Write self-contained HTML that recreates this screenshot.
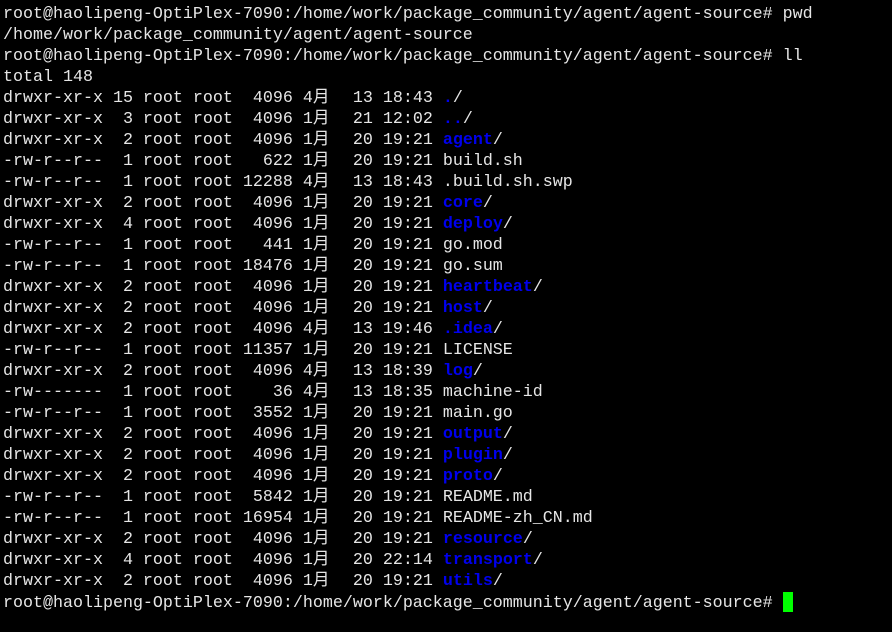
<!DOCTYPE html>
<html><head><meta charset="utf-8"><style>
html,body{margin:0;padding:0;background:#000;width:892px;height:632px;overflow:hidden}
pre{margin:0;padding:4px 0 0 3px;font-family:"Liberation Mono","Noto Sans CJK SC",monospace;font-size:16.67px;line-height:21px;color:#e6e6e6;white-space:pre}
.m{display:inline-block;width:50px}
.b{color:#0000ee;font-weight:bold}
.c{display:inline-block;width:10px;height:20px;background:#00ff00;vertical-align:-5px}
</style></head><body><pre>root@haolipeng-OptiPlex-7090:/home/work/package_community/agent/agent-source# pwd
/home/work/package_community/agent/agent-source
root@haolipeng-OptiPlex-7090:/home/work/package_community/agent/agent-source# ll
total 148
drwxr-xr-x 15 root root  4096 <span class="m">4月</span>13 18:43 <span class="b">.</span>/
drwxr-xr-x  3 root root  4096 <span class="m">1月</span>21 12:02 <span class="b">..</span>/
drwxr-xr-x  2 root root  4096 <span class="m">1月</span>20 19:21 <span class="b">agent</span>/
-rw-r--r--  1 root root   622 <span class="m">1月</span>20 19:21 build.sh
-rw-r--r--  1 root root 12288 <span class="m">4月</span>13 18:43 .build.sh.swp
drwxr-xr-x  2 root root  4096 <span class="m">1月</span>20 19:21 <span class="b">core</span>/
drwxr-xr-x  4 root root  4096 <span class="m">1月</span>20 19:21 <span class="b">deploy</span>/
-rw-r--r--  1 root root   441 <span class="m">1月</span>20 19:21 go.mod
-rw-r--r--  1 root root 18476 <span class="m">1月</span>20 19:21 go.sum
drwxr-xr-x  2 root root  4096 <span class="m">1月</span>20 19:21 <span class="b">heartbeat</span>/
drwxr-xr-x  2 root root  4096 <span class="m">1月</span>20 19:21 <span class="b">host</span>/
drwxr-xr-x  2 root root  4096 <span class="m">4月</span>13 19:46 <span class="b">.idea</span>/
-rw-r--r--  1 root root 11357 <span class="m">1月</span>20 19:21 LICENSE
drwxr-xr-x  2 root root  4096 <span class="m">4月</span>13 18:39 <span class="b">log</span>/
-rw-------  1 root root    36 <span class="m">4月</span>13 18:35 machine-id
-rw-r--r--  1 root root  3552 <span class="m">1月</span>20 19:21 main.go
drwxr-xr-x  2 root root  4096 <span class="m">1月</span>20 19:21 <span class="b">output</span>/
drwxr-xr-x  2 root root  4096 <span class="m">1月</span>20 19:21 <span class="b">plugin</span>/
drwxr-xr-x  2 root root  4096 <span class="m">1月</span>20 19:21 <span class="b">proto</span>/
-rw-r--r--  1 root root  5842 <span class="m">1月</span>20 19:21 README.md
-rw-r--r--  1 root root 16954 <span class="m">1月</span>20 19:21 README-zh_CN.md
drwxr-xr-x  2 root root  4096 <span class="m">1月</span>20 19:21 <span class="b">resource</span>/
drwxr-xr-x  4 root root  4096 <span class="m">1月</span>20 22:14 <span class="b">transport</span>/
drwxr-xr-x  2 root root  4096 <span class="m">1月</span>20 19:21 <span class="b">utils</span>/
root@haolipeng-OptiPlex-7090:/home/work/package_community/agent/agent-source# <span class="c"></span></pre></body></html>
